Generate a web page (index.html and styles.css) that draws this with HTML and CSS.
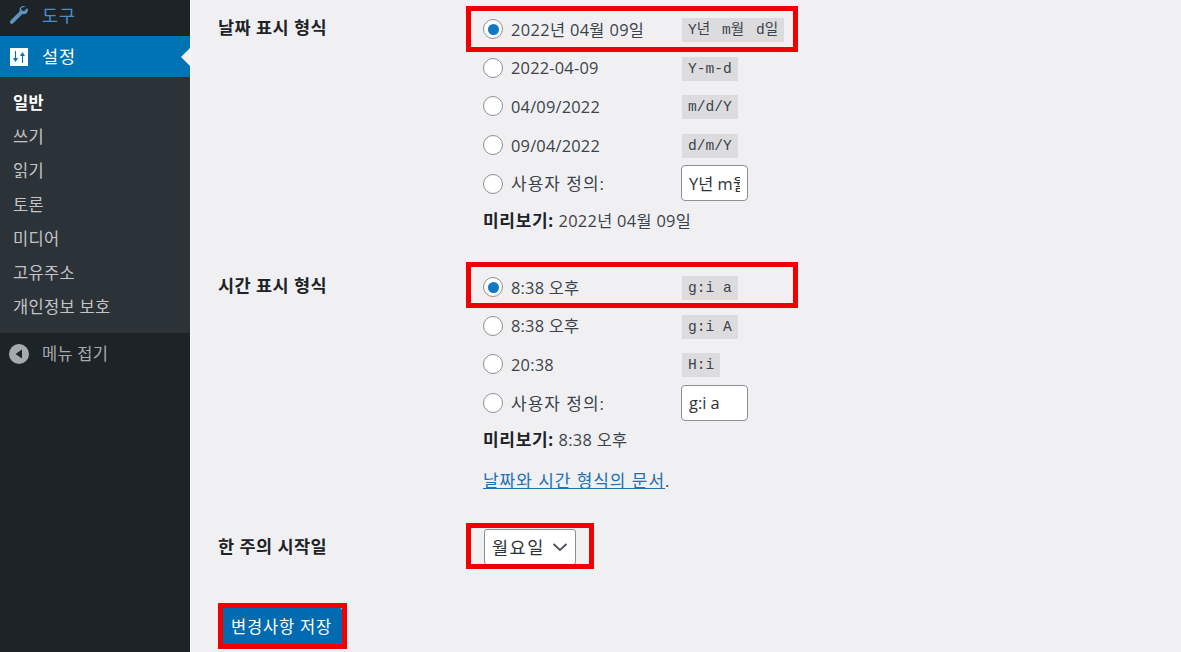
FILE: index.html
```html
<!DOCTYPE html>
<html lang="ko">
<head>
    <meta charset="UTF-8">
    <meta name="viewport" content="width=device-width, initial-scale=1.0">
    <title>일반 설정</title>
    <link rel="stylesheet" href="styles.css">
</head>
<body>
    <div class="sidebar">
        <div class="menu-item tools">
            <svg class="menu-icon" viewBox="0 0 20 20"><path d="M16.700 1.600c-1.500-1-3.600-.9-5 .4-1.200 1.200-1.500 2.900-.9 4.300L1.500 15.600c-.8.800-.8 2 0 2.700.8.800 2 .8 2.700 0l9.300-9.300c1.400.6 3.100.300 4.300-.9 1.400-1.400 1.500-3.500.4-5l-3 3-2.500-.7-.7-2.500z"/></svg>
            <span>도구</span>
        </div>
        <div class="menu-item current">
            <svg class="menu-icon" viewBox="0 0 20 20">
                <rect x="1" y="1" width="18" height="18"/>
                <path class="slider" d="M6 4v7H4l2.500 4L9 11H7V4zM13 16V9h-2l2.500-4L16 9h-2v7z"/>
            </svg>
            <span>설정</span>
        </div>
        <ul class="submenu">
            <li class="active">일반</li>
            <li>쓰기</li>
            <li>읽기</li>
            <li>토론</li>
            <li>미디어</li>
            <li>고유주소</li>
            <li>개인정보 보호</li>
        </ul>
        <div class="menu-item collapse">
            <svg class="menu-icon" viewBox="0 0 20 20"><path fill-rule="evenodd" d="M10 0a10 10 0 1 1 0 20 10 10 0 0 1 0-20zM13 5.500 6.500 10l6.500 4.500z"/></svg>
            <span>메뉴 접기</span>
        </div>
    </div>

    <div class="content">
        <div class="setting date-setting">
            <div class="label">날짜 표시 형식</div>
            <div class="field">
                <div class="option"><span class="radio checked"></span><span class="option-text mixed">2022년 04월 09일</span><code class="wide">Y년 m월 d일</code></div>
                <div class="option"><span class="radio"></span><span class="option-text">2022-04-09</span><code>Y-m-d</code></div>
                <div class="option"><span class="radio"></span><span class="option-text">04/09/2022</span><code>m/d/Y</code></div>
                <div class="option"><span class="radio"></span><span class="option-text">09/04/2022</span><code>d/m/Y</code></div>
                <div class="option"><span class="radio"></span><span class="option-text ko">사용자 정의:</span><input class="custom" type="text" value="Y년 m월 d일"></div>
                <p class="preview"><strong>미리보기:</strong> 2022년 04월 09일</p>
            </div>
        </div>

        <div class="setting time-setting">
            <div class="label">시간 표시 형식</div>
            <div class="field">
                <div class="option"><span class="radio checked"></span><span class="option-text">8:38 오후</span><code>g:i a</code></div>
                <div class="option"><span class="radio"></span><span class="option-text">8:38 오후</span><code>g:i A</code></div>
                <div class="option"><span class="radio"></span><span class="option-text">20:38</span><code>H:i</code></div>
                <div class="option"><span class="radio"></span><span class="option-text ko">사용자 정의:</span><input class="custom" type="text" value="g:i a"></div>
                <p class="preview"><strong>미리보기:</strong> 8:38 오후</p>
                <p class="doc"><a href="#">날짜와 시간 형식의 문서</a>.</p>
            </div>
        </div>

        <div class="setting week-setting">
            <div class="label">한 주의 시작일</div>
            <div class="field">
                <div class="select">월요일<svg viewBox="0 0 16 16"><path d="M1.500 5 8 11l6.500-6"/></svg></div>
            </div>
        </div>

        <button class="save">변경사항 저장</button>

        <!-- 빨간 강조 박스 -->
        <div class="mark mark-date"></div>
        <div class="mark mark-time"></div>
        <div class="mark mark-week"></div>
        <div class="mark mark-save"></div>
    </div>
</body>
</html>
```

FILE: styles.css
```css
* {
    box-sizing: border-box;
}
html, body {
    height: 100%;
    overflow: hidden;
}
body {
    margin: 0;
    display: flex;
    background: #f0f0f3;
    color: #3c434a;
    font-family: "Open Sans", "Noto Sans CJK KR", sans-serif;
    font-size: 16.4px;
    line-height: 23px;
}
.sidebar {
    width: 191px;
    flex-shrink: 0;
    background: #1d2327;
    color: #f0f0f1;
    border-right: 1px solid #f8f8f8;
}
.menu-item {
    display: flex;
    align-items: center;
    padding-left: 9px;
    gap: 13px;
    height: 41px;
    position: relative;
    font-size: 17.5px;
    letter-spacing: .8px;
}
.menu-icon {
    width: 20px;
    height: 20px;
    fill: #a7aaad;
}
.tools {
    height: 36px;
    padding-bottom: 6px;
    color: #4a90c8;
}
.tools .menu-icon {
    fill: #5f93bd;
}
.current {
    background: #0073b5;
    color: #fff;
}
.current .menu-icon {
    fill: #fff;
}
.current .menu-icon .slider {
    fill: #0073b5;
}
.current::after {
    content: "";
    position: absolute;
    right: 0;
    top: 12px;
    border: 9px solid transparent;
    border-right-color: #f0f0f3;
    border-left: 0;
}
.submenu {
    list-style: none;
    margin: 0;
    padding: 9px 0;
    background: #2c3338;
    color: #c3c4c7;
    font-size: 16.5px;
    letter-spacing: .3px;
}
.submenu li {
    height: 34px;
    line-height: 34px;
    padding-left: 13px;
}
.submenu .active {
    color: #fff;
    font-weight: 700;
}
.collapse {
    color: #a7aaad;
    font-size: 16.5px;
    letter-spacing: .2px;
}
.content {
    flex: 1;
    position: relative;
    padding-top: 10px;
    padding-left: 27px;
}
.setting {
    display: flex;
}
.label {
    width: 265px;
    flex-shrink: 0;
    padding-top: 6px;
    font-weight: 700;
    color: #1d2327;
    font-size: 17.5px;
    letter-spacing: .4px;
}
.time-setting {
    margin-top: 27px;
}
.week-setting {
    margin-top: 37px;
}
.option {
    display: flex;
    align-items: center;
    height: 38.6px;
}
.radio {
    width: 20px;
    height: 20px;
    border: 1px solid #8c8f94;
    border-radius: 50%;
    background: #fff;
    margin-right: 8px;
    flex-shrink: 0;
    display: flex;
    align-items: center;
    justify-content: center;
}
.radio.checked::before {
    content: "";
    width: 11px;
    height: 11px;
    border-radius: 50%;
    background: #0f7ac2;
}
.option-text {
    width: 171px;
    flex-shrink: 0;
    letter-spacing: .2px;
}
.option-text.mixed {
    letter-spacing: .35px;
}
.option-text.ko {
    font-size: 17px;
    letter-spacing: 1px;
    margin-right: -1px;
}
code {
    background: #dcdcde;
    font-family: "Liberation Mono", "Noto Sans CJK KR", monospace;
    font-size: 14.6px;
    padding: 3px 6px;
    height: 24px;
    line-height: 18px;
    white-space: pre;
    margin-top: 2px;
}
code.wide {
    word-spacing: 3px;
}
.custom {
    width: 67px;
    height: 36px;
    margin-top: -1px;
    border: 1px solid #8c8f94;
    border-radius: 4px;
    padding: 0 7px;
    font: inherit;
    font-size: 16.4px;
    color: #2c3338;
    background: #fff;
}
.preview {
    margin: 0;
    height: 38px;
    padding-top: 6px;
    letter-spacing: .3px;
}
.preview strong {
    color: #1d2327;
    font-size: 17px;
    letter-spacing: .7px;
}
.time-setting .preview {
    height: 35px;
    padding-top: 6px;
}
.doc {
    margin: 12px 0 0;
}
.doc a {
    color: #2271b1;
    font-size: 17px;
    letter-spacing: .95px;
}
.select {
    display: flex;
    align-items: center;
    gap: 7px;
    width: 92px;
    height: 36px;
    padding-left: 7px;
    background: #fff;
    border: 1px solid #8c8f94;
    border-radius: 3px;
    color: #2c3338;
    font-size: 17.5px;
    letter-spacing: 1.5px;
    margin-left: 1px;
}
.select svg {
    width: 16px;
    height: 16px;
    fill: none;
    stroke: #50575e;
    stroke-width: 2;
}
.save {
    display: block;
    margin: 43px 0 0 3px;
    width: 121px;
    height: 37px;
    background: #006bb0;
    color: #fff;
    border: 0;
    border-radius: 2px;
    font: inherit;
    font-size: 16.5px;
    letter-spacing: .8px;
}
.mark {
    position: absolute;
    border: 5px solid #f00000;
    pointer-events: none;
}
.mark-date {
    left: 275px;
    top: 6px;
    width: 332px;
    height: 46px;
}
.mark-time {
    left: 275px;
    top: 262px;
    width: 332px;
    height: 46px;
}
.mark-week {
    left: 275px;
    top: 523px;
    width: 128px;
    height: 46px;
}
.mark-save {
    left: 27px;
    top: 603px;
    width: 129px;
    height: 46px;
}
```
